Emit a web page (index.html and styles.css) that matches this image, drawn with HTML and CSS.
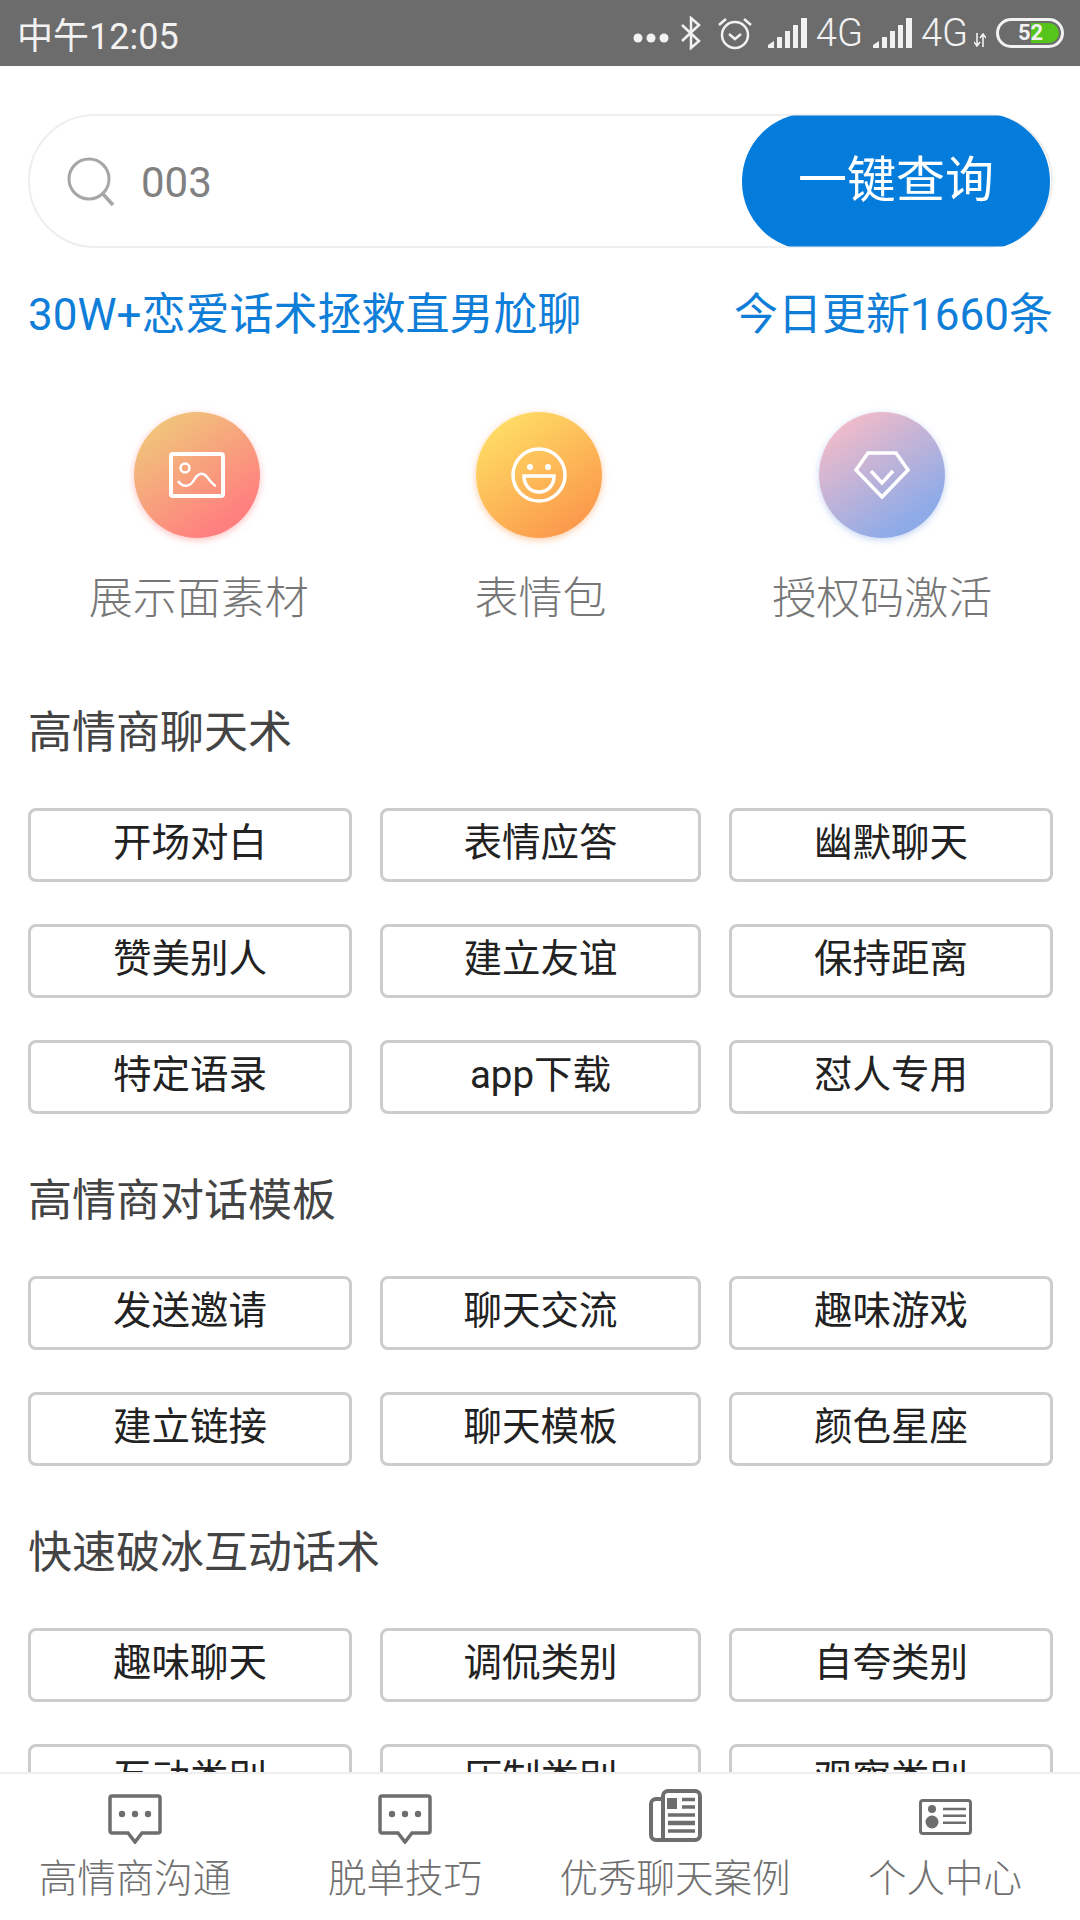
FILE: index.html
```html
<!DOCTYPE html>
<html lang="zh-CN">
<head>
  <meta charset="UTF-8">
  <meta name="viewport" content="width=device-width, initial-scale=1.0">
  <title>高情商沟通</title>
  <link rel="stylesheet" href="styles.css">
</head>
<body>
  <div class="status-bar">
    <span class="status-time">中午12:05</span>
    <div class="status-icons">
      <svg class="st-dots" width="36" height="10" viewBox="0 0 36 10"><circle cx="5" cy="5" r="4.5"/><circle cx="18" cy="5" r="4.5"/><circle cx="31" cy="5" r="4.5"/></svg>
      <svg class="st-bt" width="22" height="34" viewBox="0 0 22 34"><path d="M2 9l17 16-8 7V2l8 7L2 25" fill="none" stroke="#f2f2f2" stroke-width="2.5"/></svg>
      <svg class="st-alarm" width="36" height="34" viewBox="0 0 36 34"><circle cx="18" cy="19" r="13" fill="none" stroke="#f2f2f2" stroke-width="2.5"/><path d="M12 18l6 5 6-5M2 9l7-6M34 9l-7-6" fill="none" stroke="#f2f2f2" stroke-width="2.5"/></svg>
      <svg class="st-signal" width="40" height="30" viewBox="0 0 40 30"><path d="M0 30v-3l6-4v7zM9 30V19h5v11zM17 30V13h5v17zM25 30V7h5v23zM33 30V0h6v30z"/></svg>
      <span class="st-net">4G</span>
      <svg class="st-signal" width="40" height="30" viewBox="0 0 40 30"><path d="M0 30v-3l6-4v7zM9 30V19h5v11zM17 30V13h5v17zM25 30V7h5v23zM33 30V0h6v30z"/></svg>
      <span class="st-net">4G</span>
      <svg class="st-arrows" width="12" height="14" viewBox="0 0 12 14"><path d="M3 0v13M0 9l3 4 3-4M9 14V1M6 5l3-4 3 4" fill="none" stroke="#f2f2f2" stroke-width="1.6"/></svg>
      <div class="battery"><span class="battery-fill"></span><span class="battery-num">52</span></div>
    </div>
  </div>

  <main class="content">
    <div class="search">
      <svg class="search-icon" width="48" height="50" viewBox="0 0 48 50"><circle cx="22" cy="22" r="20" fill="none" stroke="#a6a6a6" stroke-width="3"/><path d="M36 37l10 11" fill="none" stroke="#a6a6a6" stroke-width="3.5"/></svg>
      <span class="search-text">003</span>
      <div class="search-btn">一键查询</div>
    </div>

    <div class="slogan">
      <span>30W+恋爱话术拯救直男尬聊</span>
      <span>今日更新1660条</span>
    </div>

    <div class="shortcuts">
      <div class="shortcut">
        <div class="shortcut-icon icon-orange">
          <svg width="56" height="46" viewBox="0 0 56 46"><rect x="2" y="2" width="52" height="42" rx="2" fill="none" stroke="#fff" stroke-width="4"/><circle cx="16" cy="16" r="4.5" fill="none" stroke="#fff" stroke-width="2.5"/><path d="M9 29c5 7 12 6 16-1s9-8 13-3 6 8 9 9" fill="none" stroke="#fff" stroke-width="2.5"/></svg>
        </div>
        <div class="shortcut-label">展示面素材</div>
      </div>
      <div class="shortcut">
        <div class="shortcut-icon icon-yellow">
          <svg width="56" height="56" viewBox="0 0 56 56"><circle cx="28" cy="28" r="26" fill="none" stroke="#fff" stroke-width="3.5"/><circle cx="19" cy="20" r="3" fill="#fff"/><circle cx="37" cy="20" r="3" fill="#fff"/><path d="M13 29h30c0 10-7 16-15 16s-15-6-15-16z" fill="none" stroke="#fff" stroke-width="3.5"/></svg>
        </div>
        <div class="shortcut-label">表情包</div>
      </div>
      <div class="shortcut">
        <div class="shortcut-icon icon-blue">
          <svg width="56" height="48" viewBox="0 0 56 48"><path d="M14 2h28l12 17-26 27L2 19z" fill="none" stroke="#fff" stroke-width="3.5"/><path d="M17 20l11 12 11-12" fill="none" stroke="#fff" stroke-width="3.5"/></svg>
        </div>
        <div class="shortcut-label">授权码激活</div>
      </div>
    </div>

    <section class="group group-first">
      <h2>高情商聊天术</h2>
      <div class="tags">
        <a class="tag">开场对白</a>
        <a class="tag">表情应答</a>
        <a class="tag">幽默聊天</a>
        <a class="tag">赞美别人</a>
        <a class="tag">建立友谊</a>
        <a class="tag">保持距离</a>
        <a class="tag">特定语录</a>
        <a class="tag">app下载</a>
        <a class="tag">怼人专用</a>
      </div>
    </section>

    <section class="group">
      <h2>高情商对话模板</h2>
      <div class="tags">
        <a class="tag">发送邀请</a>
        <a class="tag">聊天交流</a>
        <a class="tag">趣味游戏</a>
        <a class="tag">建立链接</a>
        <a class="tag">聊天模板</a>
        <a class="tag">颜色星座</a>
      </div>
    </section>

    <section class="group">
      <h2>快速破冰互动话术</h2>
      <div class="tags">
        <a class="tag">趣味聊天</a>
        <a class="tag">调侃类别</a>
        <a class="tag">自夸类别</a>
        <a class="tag">互动类别</a>
        <a class="tag">压制类别</a>
        <a class="tag">观察类别</a>
      </div>
    </section>
  </main>

  <nav class="tabbar">
    <div class="tab">
      <div class="tab-icon">
        <svg class="ico-chat" width="54" height="50" viewBox="0 0 54 50"><path d="M4 2h46a2 2 0 0 1 2 2v33a2 2 0 0 1-2 2H34l-7 9-7-9H4a2 2 0 0 1-2-2V4a2 2 0 0 1 2-2z" fill="none" stroke="#6e6e6e" stroke-width="3.5"/><circle cx="14" cy="20" r="3.2" fill="#6e6e6e"/><circle cx="27" cy="20" r="3.2" fill="#6e6e6e"/><circle cx="40" cy="20" r="3.2" fill="#6e6e6e"/></svg>
      </div>
      <span>高情商沟通</span>
    </div>
    <div class="tab">
      <div class="tab-icon">
        <svg class="ico-chat" width="54" height="50" viewBox="0 0 54 50"><path d="M4 2h46a2 2 0 0 1 2 2v33a2 2 0 0 1-2 2H34l-7 9-7-9H4a2 2 0 0 1-2-2V4a2 2 0 0 1 2-2z" fill="none" stroke="#6e6e6e" stroke-width="3.5"/><circle cx="14" cy="20" r="3.2" fill="#6e6e6e"/><circle cx="27" cy="20" r="3.2" fill="#6e6e6e"/><circle cx="40" cy="20" r="3.2" fill="#6e6e6e"/></svg>
      </div>
      <span>脱单技巧</span>
    </div>
    <div class="tab">
      <div class="tab-icon">
        <svg width="53" height="53" viewBox="0 0 53 53"><path d="M19 2h27a5 5 0 0 1 5 5v39a5 5 0 0 1-5 5H14V7a5 5 0 0 1 5-5zM14 10H7a5 5 0 0 0-5 5v31a5 5 0 0 0 5 5h7" fill="none" stroke="#6e6e6e" stroke-width="4"/><rect x="18" y="9" width="10" height="11" fill="#6e6e6e"/><path d="M33 10.500h13M33 18h13M19 26h27M19 42h27" fill="none" stroke="#6e6e6e" stroke-width="3.5"/><path d="M19 34h27" fill="none" stroke="#6e6e6e" stroke-width="4.5"/></svg>
      </div>
      <span>优秀聊天案例</span>
    </div>
    <div class="tab">
      <div class="tab-icon">
        <svg class="ico-id" width="53" height="36" viewBox="0 0 53 36"><rect x="1.500" y="1.500" width="50" height="33" rx="2.500" fill="none" stroke="#6e6e6e" stroke-width="3"/><circle cx="13" cy="10" r="4" fill="#6e6e6e"/><ellipse cx="13" cy="23" rx="6.500" ry="6.500" fill="#6e6e6e"/><path d="M24 10h23M24 16.800h23M24 23.800h23" fill="none" stroke="#6e6e6e" stroke-width="2.600"/></svg>
      </div>
      <span>个人中心</span>
    </div>
  </nav>
</body>
</html>
```

FILE: styles.css
```css
body {
  font-family: "Roboto", "Noto Sans CJK SC", sans-serif;
  margin: 0;
  padding: 0;
  width: 1080px;
  height: 1920px;
  overflow: hidden;
  display: flex;
  flex-direction: column;
  background: #fff;
}

.status-bar {
  flex: none;
  height: 66px;
  background: #6c6c6c;
  color: #f2f2f2;
  display: flex;
  align-items: center;
  justify-content: space-between;
  padding: 0 16px 0 17px;
}

.status-time {
  font-size: 36px;
}

.status-icons {
  display: flex;
  align-items: center;
}

.status-icons svg {
  fill: #f2f2f2;
  display: block;
}

.st-dots { margin: 10px 11px 0 0; }
.st-bt { margin-right: 15px; }
.st-alarm { margin-right: 15px; }
.st-signal { margin-right: 8px; }

.st-net {
  font-size: 38px;
  font-weight: 300;
  margin-right: 10px;
  line-height: 40px;
}

.st-arrows { margin: 14px 10px 0 -4px; }

.battery {
  position: relative;
  width: 68px;
  height: 30px;
  box-sizing: border-box;
  border: 3px solid #f2f2f2;
  border-radius: 15px;
  overflow: hidden;
}

.battery-fill {
  position: absolute;
  top: 2px;
  bottom: 2px;
  left: 32px;
  right: 2px;
  border-radius: 0 11px 11px 0;
  background: #55c51c;
}

.battery-num {
  position: absolute;
  left: 19px;
  top: -3px;
  font-size: 22px;
  line-height: 30px;
  font-weight: 700;
  color: #f2f2f2;
}

.content {
  flex: 1;
  min-height: 0;
  overflow: hidden;
  padding: 48px 27px 0 28px;
}

.search {
  height: 134px;
  box-sizing: border-box;
  border: 2px solid #eee;
  border-radius: 67px;
  display: flex;
  align-items: center;
  padding-left: 37px;
}

.search-icon {
  flex: none;
  margin-top: 2px;
}

.search-text {
  flex: 1;
  margin-left: 26px;
  padding-top: 2px;
  font-size: 42px;
  color: #808080;
}

/* a circle a little taller than the box, cut flat top and bottom */
.search-btn {
  flex: none;
  width: 308px;
  height: 137px;
  margin-right: 1px;
  border-radius: 68px;
  clip-path: inset(3px 0);
  background: #047cdc;
  color: #fff;
  font-size: 49px;
  line-height: 135px;
  text-align: center;
}

.slogan {
  display: flex;
  justify-content: space-between;
  margin-top: 45px;
  font-size: 44px;
  line-height: 44px;
  color: #0f7ed8;
}

.shortcuts {
  display: grid;
  grid-template-columns: repeat(3, 1fr);
  margin-top: 75px;
}

.shortcut {
  display: flex;
  flex-direction: column;
  align-items: center;
}

.shortcut-icon {
  width: 126px;
  height: 126px;
  border-radius: 50%;
  display: flex;
  align-items: center;
  justify-content: center;
}

.icon-orange {
  margin-right: 3px;
  background: linear-gradient(145deg, #efc97a 8%, #ff7f7f 82%);
  box-shadow: 0 2px 7px rgba(255, 127, 127, 0.5);
}

.icon-yellow {
  margin-right: 3px;
  background: linear-gradient(145deg, #ffe066 8%, #fb9a4c 85%);
  box-shadow: 0 2px 7px rgba(251, 154, 76, 0.5);
}

.icon-blue {
  background: linear-gradient(145deg, #f7bcc6 8%, #8eabe8 80%);
  box-shadow: 0 2px 7px rgba(142, 171, 232, 0.5);
}

.shortcut-label {
  margin-top: 37px;
  font-size: 44px;
  line-height: 48px;
  font-weight: 300;
  color: #777;
}

.group {
  margin-top: 62px;
}

.group-first {
  margin-top: 85px;
}

.group h2 {
  margin: 0 0 50px;
  font-size: 44px;
  line-height: 50px;
  font-weight: 400;
  color: #444;
}

.tags {
  display: grid;
  grid-template-columns: 324px 321px 324px;
  gap: 42px 28px;
}

.tag {
  height: 74px;
  box-sizing: border-box;
  border: 3px solid #ccc;
  border-radius: 8px;
  text-align: center;
  font-size: 38.5px;
  line-height: 63px;
  color: #222;
}

.tabbar {
  flex: none;
  height: 148px;
  box-sizing: border-box;
  border-top: 2px solid #eee;
  background: #fff;
  display: grid;
  grid-template-columns: repeat(4, 1fr);
}

.tab {
  display: flex;
  flex-direction: column;
  align-items: center;
  padding-top: 15px;
  font-size: 38.5px;
  font-weight: 300;
  line-height: 44px;
  color: #707070;
}

.tab-icon {
  height: 56px;
  margin-bottom: 12px;
}

.tab-icon svg {
  display: block;
}

.ico-chat {
  margin-top: 5px;
}

.ico-id {
  margin-top: 10px;
}
```
